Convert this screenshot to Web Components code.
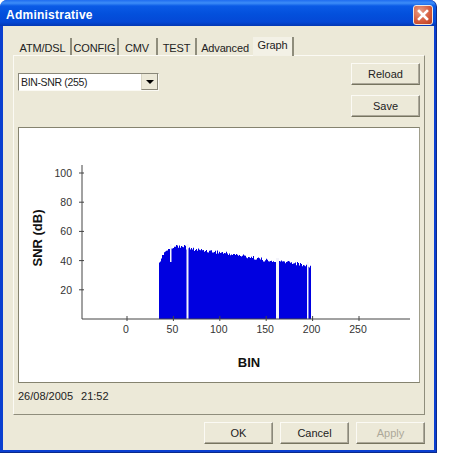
<!DOCTYPE html>
<html>
<head>
<meta charset="utf-8">
<style>
html, body { margin: 0; padding: 0; background: #fff; }
body { width: 474px; height: 453px; overflow: hidden; font: 11px "Liberation Sans", Arial, sans-serif; color: #111; }
</style>
</head>
<body>
<xp-window heading="Administrative">
  <xp-tabs></xp-tabs>
  <div slot="footer">
    <xp-button>OK</xp-button>
    <xp-button>Cancel</xp-button>
    <xp-button disabled>Apply</xp-button>
  </div>
</xp-window>
<script>
class XpWindow extends HTMLElement {
constructor() {
    super();
    this.attachShadow({ mode: 'open' });
    this.shadowRoot.innerHTML = `
    <style>
    :host { display: block; width: 437px; height: 453px; }
    .frame {
        height: 453px;
        box-sizing: border-box;
        display: flex;
        flex-direction: column;
        background: #0a3fd0;
        border-radius: 7px 7px 0 0;
        border-right: 1px solid #0a2a8c;
        border-bottom: 1px solid #0a2a8c;
        padding: 0 2px 2px 3px;
    }
    .title {
        height: 26px;
        flex: none;
        margin: 0 -2px 0 -3px;
        padding: 0 3px 0 6px;
        display: flex;
        align-items: center;
        justify-content: space-between;
        border-radius: 7px 7px 0 0;
        background: linear-gradient(#1f6cf0 0, #3d8df8 3px, #0a5ae6 6px, #0350dc 14px, #0448d6 22px, #0338b4 26px);
        color: #fff;
        font: bold 12px "Liberation Sans", Arial, sans-serif;
        letter-spacing: 0.02em;
    }
    .title span { margin-top: 4px; }
    .close {
        width: 20px;
        height: 20px;
        margin-top: 3px;
        box-sizing: border-box;
        border: 1px solid #f0e8e0;
        border-radius: 3px;
        background: radial-gradient(circle at 35% 30%, #e9a088, #d4593a 60%, #b83c20);
    }
    .close svg { display: block; }
    .client {
        flex: 1;
        display: flex;
        flex-direction: column;
        background: #ece9d8;
        padding: 11px 9px 0 10px;
        min-height: 0;
    }
    .footer {
        flex: none;
        height: 35px;
        display: flex;
        justify-content: flex-end;
    }
    ::slotted([slot=footer]) {
        display: flex;
        gap: 7px;
        margin: 7px 0 0 0;
        height: 22px;
    }
    </style>
    <div class="frame">
        <div class="title">
            <span></span>
            <div class="close">
                <svg width="18" height="18" viewBox="0 0 18 18"><path d="M5 5 L13 13 M13 5 L5 13" stroke="#fff" stroke-width="2.6" stroke-linecap="square"/></svg>
            </div>
        </div>
        <div class="client">
            <slot></slot>
            <div class="footer"><slot name="footer"></slot></div>
        </div>
    </div>
    `;
    this.shadowRoot.querySelector('.title span').textContent = this.getAttribute('heading');
}
}

class XpButton extends HTMLElement {
constructor() {
    super();
    this.attachShadow({ mode: 'open' });
    this.shadowRoot.innerHTML = `
    <style>
    :host {
        display: flex;
        width: 69px;
        height: 22px;
        box-sizing: border-box;
        align-items: center;
        justify-content: center;
        background: #ece9d8;
        border: 1px solid;
        border-color: #fbfaf4 #8a887a #76745f #fbfaf4;
        box-shadow: inset -1px -1px 0 #aca899;
        font: 11px "Liberation Sans", Arial, sans-serif;
        color: #222;
    }
    :host([disabled]) { color: #aca899; }
    </style>
    <slot></slot>
    `;
}
}

class XpCombo extends HTMLElement {
constructor() {
    super();
    this.attachShadow({ mode: 'open' });
    this.shadowRoot.innerHTML = `
    <style>
    :host {
        display: flex;
        width: 141px;
        height: 18px;
        box-sizing: border-box;
        align-items: stretch;
        background: #fff;
        border: 1px solid;
        border-color: #8a887a #fbfaf4 #fbfaf4 #8a887a;
        font: 10.5px "Liberation Sans", Arial, sans-serif;
        letter-spacing: -0.35px;
        color: #222;
    }
    .val { flex: 1; padding-left: 2px; line-height: 17px; }
    .btn {
        width: 15px;
        background: #ece9d8;
        border-left: 1px solid #d8d5c4;
        border-bottom: 1px solid #8a887a;
        border-right: 1px solid #8a887a;
        display: flex;
        align-items: center;
        justify-content: center;
    }
    .arrow { width: 0; height: 0; border: 4px solid transparent; border-top: 4px solid #000; border-bottom: 0; }
    </style>
    <div class="val"><slot></slot></div>
    <div class="btn"><div class="arrow"></div></div>
    `;
}
}

class SnrChart extends HTMLElement {
constructor() {
    super();
    this.attachShadow({ mode: 'open' });
    // profile of the top of the blue area, x / y in chart coordinates
    const knots = [[159,263],[160,260],[163,255],[166,250],[170,248],[176,246],[183,246],[186,248],[190,249],[200,250],[217,252],[230,254],[243,256],[255,258],[273,262],[280,262],[290,262],[307,266],[311,266]];
    const ox = 18, oy = 127;
    let top = '';
    let x = 159;
    let k = 0;
    while (x < 311) {
        while (knots[k + 1][0] < x) k++;
        const a = knots[k], b = knots[k + 1];
        let y = a[1] + (b[1] - a[1]) * (x - a[0]) / (b[0] - a[0]);
        const n = Math.sin(x * 12.9898) * 43758.5453;
        y += ((n - Math.floor(n)) - 0.5) * 3.6;
        top += `L${x - ox} ${(y - oy).toFixed(1)} L${x + 1 - ox} ${(y - oy).toFixed(1)} `;
        x++;
    }
    const base = 319 - oy;
    const area = `M${159 - ox} ${base} ${top}L${311 - ox} ${base} Z`;
    const xl = (v) => 127 + v * 0.928 - ox;
    const yl = (v) => 319 - v * 1.46 - oy;
    let marks = '';
    for (const v of [0, 50, 100, 150, 200, 250]) {
        marks += `<line x1="${xl(v)}" x2="${xl(v)}" y1="${base - 3}" y2="${base + 2}"/>`;
    }
    for (const v of [20, 40, 60, 80, 100]) {
        marks += `<line x1="${82 - ox - 3}" x2="${82 - ox + 2}" y1="${yl(v)}" y2="${yl(v)}"/>`;
    }
    let labels = '';
    for (const v of [0, 50, 100, 150, 200, 250]) {
        labels += `<text x="${xl(v) - 1}" y="${333 - oy}" text-anchor="middle">${v}</text>`;
    }
    for (const v of [20, 40, 60, 80, 100]) {
        labels += `<text x="${72 - ox}" y="${yl(v) + 4}" text-anchor="end">${v}</text>`;
    }
    this.shadowRoot.innerHTML = `
    <style>
    :host {
        display: block;
        width: 402px;
        height: 256px;
        box-sizing: border-box;
        background: #fff;
        border: 1px solid;
        border-color: #85836f #a09e8c #85836f #85836f;
    }
    svg { display: block; margin: -1px; }
    text { font: 10.5px "Liberation Sans", Arial, sans-serif; fill: #333; }
    text.big { font: bold 13px "Liberation Sans", Arial, sans-serif; fill: #111; }
    </style>
    <svg width="402" height="256" viewBox="0 0 402 256">
        <path d="${area}" fill="#0000e0"/>
        <g fill="#f4f4fa">
            <rect x="${170 - ox}" y="${244 - oy}" width="1.5" height="18"/>
            <rect x="${186.5 - ox}" y="${244 - oy}" width="2" height="${base - 244 + oy}"/>
            <rect x="${276 - ox}" y="${258 - oy}" width="3" height="${base - 258 + oy}"/>
            <rect x="${307 - ox}" y="${262 - oy}" width="1.5" height="${base - 262 + oy}"/>
        </g>
        <g stroke="#444" stroke-width="1">
            <line x1="64" x2="64" y1="${165 - oy}" y2="${base}"/>
            <line x1="64" x2="392" y1="${base}" y2="${base}"/>
            ${marks}
        </g>
        ${labels}
        <text class="big" transform="translate(${42 - ox} ${238 - oy}) rotate(-90)" text-anchor="middle">SNR (dB)</text>
        <text class="big" x="${249 - ox}" y="${367 - oy}" text-anchor="middle">BIN</text>
    </svg>
    `;
}
}

class XpTabs extends HTMLElement {
constructor() {
    super();
    this.attachShadow({ mode: 'open' });
    this.shadowRoot.innerHTML = `
    <style>
    :host { display: flex; flex-direction: column; height: 378px; flex: none; font: 11px "Liberation Sans", Arial, sans-serif; letter-spacing: -0.15px; color: #222; }
    .strip { display: flex; height: 18px; flex: none; padding-left: 2px; align-items: flex-end; }
    .tab { height: 17px; line-height: 20px; text-align: center; border-right: 2px solid #8f8d7c; box-sizing: border-box; }
    .tab.on { height: 19px; line-height: 17px; background: #f3f1e6; margin-bottom: -1px; position: relative; }
    .panel {
        flex: 1;
        box-sizing: border-box;
        border: 1px solid;
        border-color: #fbfaf4 #8f8d7c #8f8d7c #fbfaf4;
        padding: 7px 4px 0 4px;
        display: flex;
        flex-direction: column;
        letter-spacing: 0;
    }
    .top { display: flex; justify-content: space-between; height: 64px; flex: none; }
    .top xp-combo { margin-top: 10px; }
    .btns { display: flex; flex-direction: column; gap: 10px; align-items: flex-end; }
    .stamp { margin-top: 7px; font-size: 11px; }
    .stamp span { margin-left: 8px; }
    </style>
    <div class="strip">
        <div class="tab" style="width:57px">ATM/DSL</div>
        <div class="tab" style="width:47px">CONFIG</div>
        <div class="tab" style="width:39px;text-align:left;padding-left:6px">CMV</div>
        <div class="tab" style="width:39px">TEST</div>
        <div class="tab" style="width:56px;border-right:0">Advanced</div>
        <div class="tab on" style="width:41px">Graph</div>
    </div>
    <div class="panel">
        <div class="top">
            <xp-combo>BIN-SNR (255)</xp-combo>
            <div class="btns">
                <xp-button>Reload</xp-button>
                <xp-button>Save</xp-button>
            </div>
        </div>
        <snr-chart></snr-chart>
        <div class="stamp">26/08/2005<span>21:52</span></div>
    </div>
    `;
}
}

customElements.define('xp-button', XpButton);
customElements.define('xp-combo', XpCombo);
customElements.define('snr-chart', SnrChart);
customElements.define('xp-tabs', XpTabs);
customElements.define('xp-window', XpWindow);
</script>
</body>
</html>
